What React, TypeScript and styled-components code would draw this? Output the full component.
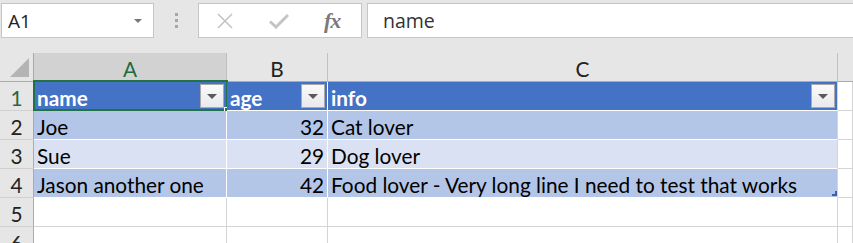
import React from "react";
import styled, { createGlobalStyle, css } from "styled-components";

const GlobalStyle = createGlobalStyle`
  html, body {
    margin: 0;
    padding: 0;
    background: #e6e6e6;
    overflow: hidden;
  }
`;

const gridFont = `Lato, "Liberation Sans", sans-serif`;
const uiFont = `"Open Sans", "Noto Sans", sans-serif`;

const Page = styled.div`
  width: 853px;
  height: 243px;
  overflow: hidden;
  background: #e6e6e6;
  display: flex;
  flex-direction: column;
`;

const FormulaBar = styled.div`
  display: flex;
  align-items: center;
  flex-shrink: 0;
  height: 35px;
  margin-top: 3px;
  margin-bottom: 15px;
  padding-left: 1px;
`;

const NameBox = styled.div`
  box-sizing: border-box;
  width: 153px;
  height: 35px;
  background: #fff;
  border: 1px solid #c6c6c6;
  display: flex;
  align-items: center;
  justify-content: space-between;
  padding: 0 11px 0 6px;
  font-family: ${uiFont};
  font-size: 19px;
  color: #222;
`;

const SmallArrow = styled.span`
  width: 0;
  height: 0;
  border-left: 4px solid transparent;
  border-right: 4px solid transparent;
  border-top: 4px solid #777;
`;

const Grip = styled.div`
  width: 44px;
  display: flex;
  flex-direction: column;
  align-items: center;
  gap: 3px;
  span {
    width: 3px;
    height: 3px;
    background: #a6a6a6;
  }
`;

const ButtonBox = styled.div`
  box-sizing: border-box;
  width: 164px;
  height: 35px;
  background: #fff;
  border: 1px solid #c6c6c6;
  display: flex;
  align-items: center;
  padding-left: 17px;
  gap: 35px;
`;

const Fx = styled.span`
  font-family: "Liberation Serif", serif;
  font-style: italic;
  font-weight: bold;
  font-size: 22px;
  color: #7a7a7a;
  margin-left: 0;
  letter-spacing: -1px;
`;

const FormulaInput = styled.div`
  box-sizing: border-box;
  flex: 1;
  height: 35px;
  margin-left: 5px;
  background: #fff;
  border: 1px solid #c6c6c6;
  border-right: none;
  display: flex;
  align-items: center;
  padding-left: 15px;
  font-family: ${uiFont};
  font-size: 19.5px;
  color: #333;
`;

const Sheet = styled.div`
  display: grid;
  grid-template-columns: 34px 193px 101px 510px 1fr;
  grid-auto-rows: 29px;
  background: #fff;
  font-family: ${gridFont};
  font-size: 20.8px;
`;

const Corner = styled.div`
  box-sizing: border-box;
  background: #e6e6e6;
  border-right: 1px solid #ababab;
  border-bottom: 1px solid #ababab;
  position: relative;
  &::after {
    content: "";
    position: absolute;
    right: 4px;
    bottom: 4px;
    width: 0;
    height: 0;
    border-left: 19px solid transparent;
    border-bottom: 19px solid #b4b4b4;
  }
`;

const ColHeader = styled.div<{ $selected?: boolean; $last?: boolean }>`
  box-sizing: border-box;
  background: ${(p) => (p.$selected ? "#d2d2d2" : "#e6e6e6")};
  border-right: ${(p) => (p.$last ? "none" : "1px solid #c0c0c0")};
  border-bottom: 1px solid #ababab;
  display: flex;
  align-items: center;
  justify-content: center;
  color: ${(p) => (p.$selected ? "#1f6b3f" : "#222")};
  padding-top: 2px;
`;

const RowHeader = styled.div<{ $selected?: boolean }>`
  box-sizing: border-box;
  background: #e6e6e6;
  border-right: 1px solid #ababab;
  border-bottom: 1px solid #d0d0d0;
  display: flex;
  align-items: center;
  justify-content: center;
  color: ${(p) => (p.$selected ? "#1f6b3f" : "#222")};
  padding-top: 2px;
`;

type Kind = "head" | "band1" | "band2" | "empty";

const kindStyles: Record<Kind, ReturnType<typeof css>> = {
  head: css`
    background: #4472c4;
    color: #fff;
    font-weight: bold;
    border-right: 1px solid #fff;
    border-bottom: 1px solid #fff;
  `,
  band1: css`
    background: #b4c6e7;
    color: #000;
    border-right: 1px solid #fff;
    border-bottom: 1px solid #fff;
  `,
  band2: css`
    background: #d9e1f2;
    color: #000;
    border-right: 1px solid #fff;
    border-bottom: 1px solid #fff;
  `,
  empty: css`
    background: #fff;
    border-right: 1px solid #d4d4d4;
    border-bottom: 1px solid #d4d4d4;
  `,
};

const Cell = styled.div<{ $kind: Kind; $right?: boolean; $edge?: boolean }>`
  box-sizing: border-box;
  position: relative;
  display: flex;
  align-items: center;
  justify-content: ${(p) => (p.$right ? "flex-end" : "flex-start")};
  padding: 2px 3px 0 3px;
  white-space: nowrap;
  ${(p) => kindStyles[p.$kind]}
  ${(p) => p.$edge && "border-right: 1px solid #d4d4d4;"}
`;

const CellText = styled.span`
  flex: 1;
  overflow: hidden;
`;

const FilterButton = styled.span`
  box-sizing: border-box;
  width: 24px;
  height: 24px;
  margin: -2px -1px 0 4px;
  border: 1px solid #a9a9a9;
  background: linear-gradient(#fafafa, #e9e9ee);
  display: flex;
  align-items: center;
  justify-content: center;
  &::before {
    content: "";
    width: 0;
    height: 0;
    border-left: 5px solid transparent;
    border-right: 5px solid transparent;
    border-top: 5px solid #5a5a5a;
  }
`;

const Selection = styled.div`
  position: absolute;
  left: -1px;
  top: -2px;
  right: -2px;
  bottom: -1px;
  border: 2px solid #217346;
  pointer-events: none;
  &::after {
    content: "";
    position: absolute;
    right: -5px;
    bottom: -5px;
    width: 5px;
    height: 5px;
    background: #217346;
    border: 1px solid #fff;
  }
`;

const ResizeMark = styled.div`
  position: absolute;
  right: 0;
  bottom: 1px;
  width: 5px;
  height: 5px;
  &::before,
  &::after {
    content: "";
    position: absolute;
    background: #3a5fb0;
  }
  &::before {
    right: 0;
    bottom: 0;
    width: 5px;
    height: 2px;
  }
  &::after {
    right: 0;
    bottom: 0;
    width: 2px;
    height: 5px;
  }
`;

const rows = [
  { name: "Joe", age: 32, info: "Cat lover" },
  { name: "Sue", age: 29, info: "Dog lover" },
  {
    name: "Jason another one",
    age: 42,
    info: "Food lover - Very long line I need to test that works",
  },
];

const CrossIcon = () => (
  <svg width="18" height="18" viewBox="0 0 18 18">
    <path d="M2 2 L16 16 M16 2 L2 16" stroke="#c4c4c4" strokeWidth="1.6" />
  </svg>
);

const CheckIcon = () => (
  <svg width="20" height="16" viewBox="0 0 20 16">
    <path d="M1 8.5 L7 14 L19 2" stroke="#c4c4c4" strokeWidth="3" fill="none" />
  </svg>
);

export default function App() {
  return (
    <>
      <GlobalStyle />
      <Page>
        <FormulaBar>
          <NameBox>
            A1
            <SmallArrow />
          </NameBox>
          <Grip>
            <span />
            <span />
            <span />
          </Grip>
          <ButtonBox>
            <CrossIcon />
            <CheckIcon />
            <Fx>fx</Fx>
          </ButtonBox>
          <FormulaInput>name</FormulaInput>
        </FormulaBar>

        <Sheet>
          <Corner />
          <ColHeader $selected>A</ColHeader>
          <ColHeader>B</ColHeader>
          <ColHeader>C</ColHeader>
          <ColHeader $last />

          <RowHeader $selected>1</RowHeader>
          <Cell $kind="head">
            <CellText>name</CellText>
            <FilterButton />
            <Selection />
          </Cell>
          <Cell $kind="head">
            <CellText>age</CellText>
            <FilterButton />
          </Cell>
          <Cell $kind="head" $edge>
            <CellText>info</CellText>
            <FilterButton />
          </Cell>
          <Cell $kind="empty" />

          {rows.map((r, i) => {
            const kind: Kind = i % 2 === 0 ? "band1" : "band2";
            const last = i === rows.length - 1;
            return (
              <React.Fragment key={r.name}>
                <RowHeader>{i + 2}</RowHeader>
                <Cell $kind={kind}>{r.name}</Cell>
                <Cell $kind={kind} $right>
                  {r.age}
                </Cell>
                <Cell $kind={kind} $edge>
                  {r.info}
                  {last && <ResizeMark />}
                </Cell>
                <Cell $kind="empty" />
              </React.Fragment>
            );
          })}

          {[5, 6].map((n) => (
            <React.Fragment key={n}>
              <RowHeader>{n}</RowHeader>
              <Cell $kind="empty" />
              <Cell $kind="empty" />
              <Cell $kind="empty" />
              <Cell $kind="empty" />
            </React.Fragment>
          ))}
        </Sheet>
      </Page>
    </>
  );
}
